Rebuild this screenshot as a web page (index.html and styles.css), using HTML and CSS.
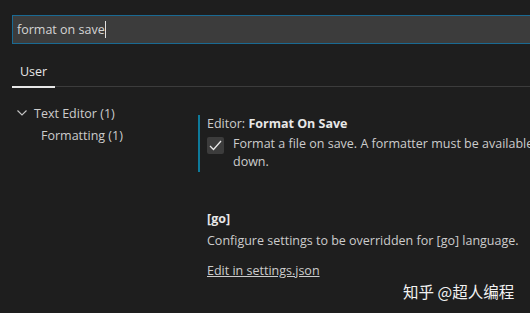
FILE: index.html
```html
<!DOCTYPE html>
<html>
<head>
    <title>Settings</title>
    <meta name="viewport" content="width=device-width, initial-scale=1">
    <link rel="stylesheet" href="styles.css">
</head>
<body>
    <div class="settings">
        <div class="search-wrap">
            <div class="search-box"><span class="search-text">format on save</span><span class="caret"></span></div>
        </div>

        <div class="tabs">
            <div class="tab active">User</div>
            <div class="tab-rest"></div>
        </div>

        <div class="main">
            <div class="toc">
                <div class="toc-item">
                    <svg class="chevron" width="10" height="6" viewBox="0 0 10 6"><path d="M0.5 0.5 L5 5 L9.5 0.5" fill="none" stroke="#c5c5c5" stroke-width="1.1"/></svg>
                    <span>Text Editor (1)</span>
                </div>
                <div class="toc-item child">Formatting (1)</div>
            </div>

            <div class="content">
                <div class="setting focused">
                    <div class="setting-title">Editor: <strong>Format On Save</strong></div>
                    <div class="setting-value">
                        <div class="checkbox">
                            <svg width="13" height="11" viewBox="0 0 13 11"><path d="M1 6 L4.5 9.5 L12 1" fill="none" stroke="#e8e8e8" stroke-width="1.3"/></svg>
                        </div>
                        <div class="setting-desc">Format a file on save. A formatter must be available, the file must not be saved after delay, and the editor must not be shutting<br>down.</div>
                    </div>
                </div>

                <div class="setting lang">
                    <div class="setting-title"><strong>[go]</strong></div>
                    <div class="setting-desc">Configure settings to be overridden for [go] language.</div>
                    <a class="edit-link" href="#">Edit in settings.json</a>
                </div>
            </div>
        </div>
    </div>

    <div class="watermark">知乎 @超人编程</div>
</body>
</html>
```

FILE: styles.css
```css
body {
    margin: 0;
    background-color: #1e1e1e;
    color: #cccccc;
    font-family: "Segoe UI", "Open Sans", sans-serif;
    font-size: 12.5px;
    overflow: hidden;
    width: 530px;
    height: 313px;
}
.settings {
    width: 1000px;
}
.search-wrap {
    padding: 15px 0 0 12px;
}
.search-box {
    height: 27px;
    border: 1px solid #1a6a93;
    background-color: #3c3c3c;
    display: flex;
    align-items: center;
    padding-left: 4px;
}
.search-text {
    color: #d4d4d4;
}
.caret {
    width: 1px;
    height: 17px;
    background-color: #e0e0e0;
}
.tabs {
    display: flex;
    align-items: flex-end;
    padding-left: 12px;
    margin-top: 16px;
}
.tab {
    padding: 2px 8px 4px 8px;
    color: #e7e7e7;
    line-height: 20px;
    border-bottom: 2px solid #e7e7e7;
}
.tab-rest {
    flex: 1;
    border-bottom: 1px solid #3c3c3c;
    margin-bottom: 1px;
}
.main {
    display: flex;
    padding-top: 14px;
}
.toc {
    width: 198px;
}
.toc-item {
    display: flex;
    align-items: center;
    height: 22px;
    padding-left: 17px;
}
.toc-item span {
    margin-left: 7px;
}
.toc-item.child {
    padding-left: 41px;
}
.content {
    flex: 1;
    padding-top: 13px;
}
.setting {
    border-left: 2px solid transparent;
    padding-left: 7px;
}
.setting.focused {
    border-left-color: #0e7a9a;
    padding-bottom: 1px;
}
.setting-title {
    line-height: 17px;
}
.setting-title strong {
    color: #e7e7e7;
}
.setting-value {
    display: flex;
    margin-top: 3px;
}
.checkbox {
    flex: none;
    width: 17px;
    height: 17px;
    margin-top: 2px;
    background-color: #3c3c3c;
    border-radius: 2px;
    display: flex;
    align-items: center;
    justify-content: center;
}
.setting-desc {
    line-height: 18px;
}
.setting-value .setting-desc {
    margin-left: 9px;
    white-space: nowrap;
}
.setting.lang {
    margin-top: 38px;
}
.setting.lang .setting-title {
    line-height: 18px;
    margin-bottom: 4px;
}
.edit-link {
    display: inline-block;
    margin-top: 12px;
    color: #cccccc;
    text-decoration: underline;
    line-height: 18px;
}
.watermark {
    position: absolute;
    left: 403px;
    top: 280px;
    color: #f2f2f2;
    font-family: "Noto Sans CJK SC", sans-serif;
    font-size: 15.5px;
}
```
